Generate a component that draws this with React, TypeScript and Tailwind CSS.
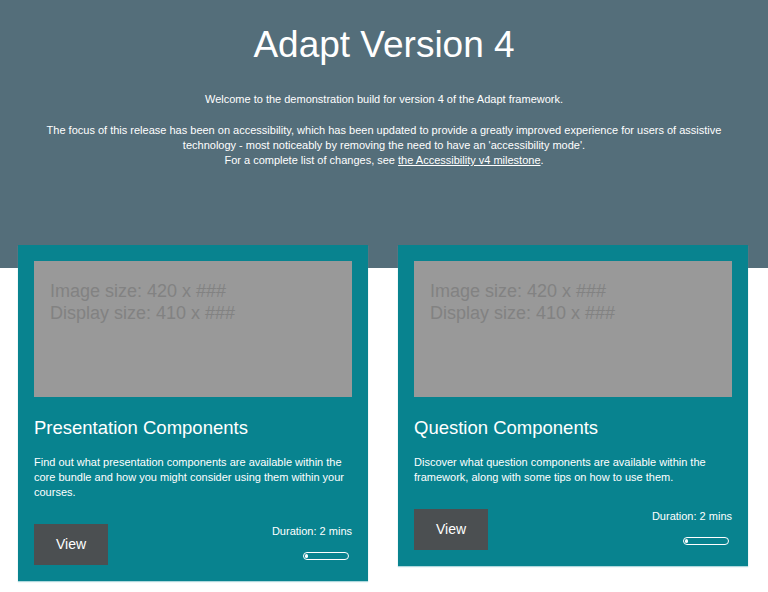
import React from "react";

type Carte = {
  titre: string;
  texte: string;
  duree: string;
};

const cartes: Carte[] = [
  {
    titre: "Presentation Components",
    texte:
      "Find out what presentation components are available within the core bundle and how you might consider using them within your courses.",
    duree: "Duration: 2 mins",
  },
  {
    titre: "Question Components",
    texte:
      "Discover what question components are available within the framework, along with some tips on how to use them.",
    duree: "Duration: 2 mins",
  },
];

function CarteMenu({ carte }: { carte: Carte }) {
  return (
    <div className="w-[350px] bg-[#08838f] p-4 text-white shadow-[0_1px_1px_rgba(120,190,198,0.6)]">
      {/* image de substitution */}
      <div className="h-[136px] bg-[#999999] px-4 pt-[19px] text-[18px] leading-[22px] text-[#828282]">
        <p>Image size: 420 x ###</p>
        <p>Display size: 410 x ###</p>
      </div>
      <h2 className="mt-[19px] text-[18.5px] leading-6">{carte.titre}</h2>
      <p className="mt-[15px] text-[11px] leading-[15px]">{carte.texte}</p>
      <div className="mt-6 flex items-start justify-between">
        <button className="h-[41px] w-[74px] bg-[#4b4f51] text-[14px] text-white">View</button>
        <div className="flex flex-col items-end">
          <span className="text-[11px] leading-[15px]">{carte.duree}</span>
          <div className="mr-[3px] mt-[13px] h-2 w-[46px] rounded-full border-[1.5px] border-white p-px">
            <div className="h-full w-[3px] rounded-full bg-white" />
          </div>
        </div>
      </div>
    </div>
  );
}

export default function App() {
  return (
    <div className="min-h-[592px] bg-white font-['Liberation_Sans',Arial,sans-serif]">
      <header className="h-[268px] bg-[#546e7a] px-[28px] pt-[23px] text-center text-white">
        <h1 className="text-[37px] leading-[44px]">Adapt Version 4</h1>
        <div className="mt-[25px] text-[11px] leading-[15px]">
          <p>Welcome to the demonstration build for version 4 of the Adapt framework.</p>
          <p className="mt-[16px]">
            The focus of this release has been on accessibility, which has been updated to provide a greatly
            improved experience for users of assistive technology - most noticeably by removing the need to
            have an 'accessibility mode'.
            <br />
            For a complete list of changes, see <a className="underline" href="#">the Accessibility v4 milestone</a>.
          </p>
        </div>
      </header>
      <main className="-mt-[23px] flex items-start gap-[30px] px-[18px]">
        {cartes.map((c) => (
          <CarteMenu key={c.titre} carte={c} />
        ))}
      </main>
    </div>
  );
}
